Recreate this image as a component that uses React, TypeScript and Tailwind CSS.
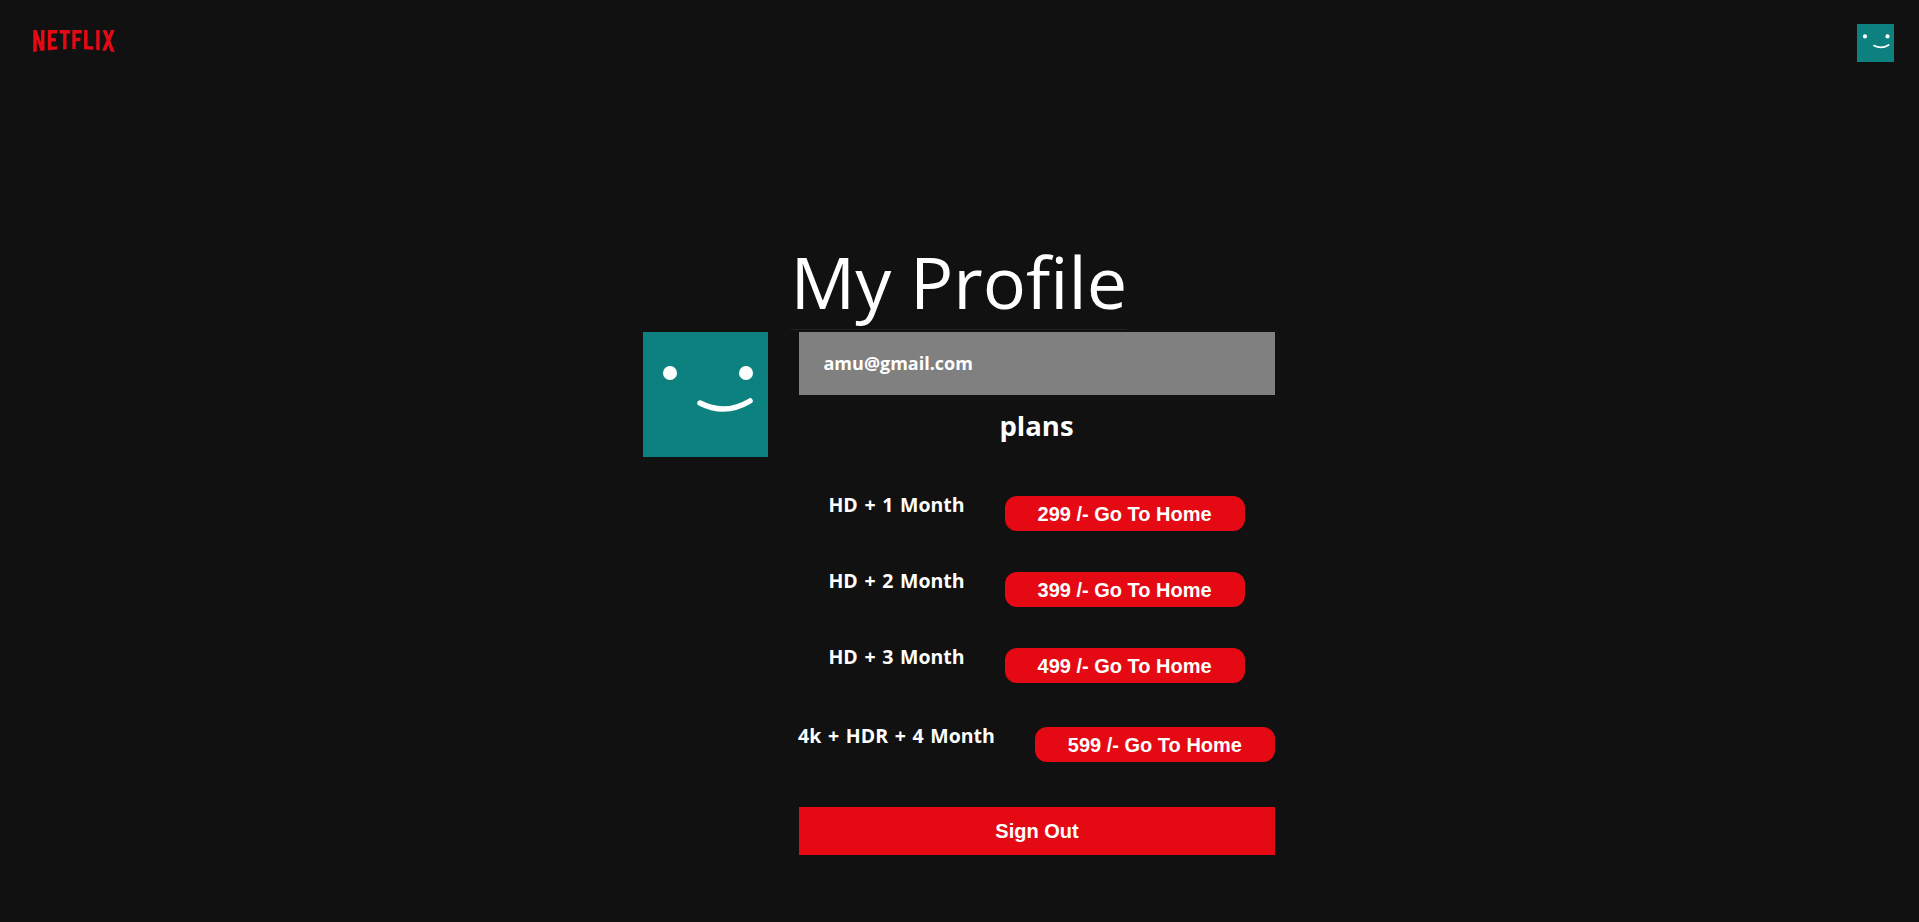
const plans = [
  { label: 'HD + 1 Month', price: '299 /- Go To Home', spacing: 'mb-[41px]' },
  { label: 'HD + 2 Month', price: '399 /- Go To Home', spacing: 'mb-[41px]' },
  { label: 'HD + 3 Month', price: '499 /- Go To Home', spacing: 'mb-[44px]' },
  { label: '4k + HDR + 4 Month', price: '599 /- Go To Home', spacing: 'mb-[45px]' }
];

const Face = ({ className }: { className: string }) => (
  <svg viewBox="0 0 125 125" preserveAspectRatio="none" className={className}>
    <rect width="125" height="125" fill="#0d8080" />
    <ellipse cx="27" cy="41" rx="7" ry="7" fill="#fff" />
    <ellipse cx="103" cy="41" rx="7" ry="7" fill="#fff" />
    <path d="M57 71 Q82 84 107 69" fill="none" stroke="#fff" strokeWidth="5.5" strokeLinecap="round" />
  </svg>
);

const Logo = () => (
  <svg viewBox="0 0 1024 276.742" className="h-[22px] w-[82px]" fill="#e50914">
    <path d="M140.803 258.904c-15.404 2.705-31.079 3.516-47.294 5.676l-49.458-144.856v151.073c-15.404 1.621-29.457 3.783-44.051 5.945v-276.742h41.08l56.212 157.021v-157.021h43.511v258.904zm85.131-157.558c16.757 0 42.431-.811 57.835-.811v43.24c-19.189 0-41.619 0-57.835.811v64.322c25.405-1.621 50.809-3.785 76.482-4.596v41.617l-119.724 9.461v-255.39h119.724v43.241h-76.482v58.105zm237.284-58.104h-44.862v198.908c-14.594 0-29.188 0-43.239.539v-199.447h-44.862v-43.242h132.965l-.002 43.242zm70.266 55.132h59.187v43.24h-59.187v98.104h-42.433v-239.718h120.808v43.241h-78.375v55.133zm148.641 103.507c24.594.539 49.456 2.434 73.51 3.783v42.701c-38.646-2.434-77.293-4.863-116.75-5.676v-242.689h43.24v201.881zm109.994 49.457c13.783.812 28.377 1.623 42.43 3.242v-254.58h-42.43v251.338zm231.881-251.338l-54.863 131.615 54.863 145.127c-16.217-2.162-32.432-5.135-48.648-7.838l-31.078-79.994-31.617 73.51c-15.678-2.705-30.812-3.516-46.484-5.678l55.672-126.75-50.269-129.992h46.482l28.377 72.699 30.27-72.699h47.295z" />
  </svg>
);

export default function App() {
  return (
    <div className="h-[922px] overflow-hidden bg-[#111111] font-['Open_Sans',sans-serif] text-white">
      <header className="flex h-[62px] items-start justify-between pr-[25px] pl-[33px]">
        <div className="pt-[30px]">
          <Logo />
        </div>
        <div className="pt-[24px]">
          <Face className="h-[38px] w-[37px]" />
        </div>
      </header>

      <main className="mx-auto mt-[170px] flex w-[632px] -translate-x-px flex-col">
        <h1 className="h-[98px] w-[336px] self-center border-b border-[#222222] text-center text-[72px] leading-[98px] font-normal whitespace-nowrap">
          My Profile
        </h1>
        <div className="mt-[2px] flex gap-[31px]">
          <Face className="h-[125px] w-[125px] shrink-0" />
          <div className="flex w-[476px] flex-col">
            <div className="flex h-[63px] items-center bg-[#808080] pl-[25px] text-[18px] font-bold">
              amu@gmail.com
            </div>
            <h2 className="mt-[14px] mb-[54px] text-center text-[27.5px] leading-[33px] font-bold">
              plans
            </h2>
            {plans.map(plan => (
              <div key={plan.label} className={`flex justify-center gap-10 ${plan.spacing}`}>
                <span className="text-[19.5px] leading-[17px] font-bold whitespace-nowrap [word-spacing:1.6px]">
                  {plan.label}
                </span>
                <button
                  type="button"
                  className="h-[35px] w-[240px] shrink-0 rounded-[12px] bg-[#e50914] font-['Liberation_Sans',sans-serif] text-[20px] font-bold"
                >
                  {plan.price}
                </button>
              </div>
            ))}
            <button
              type="button"
              className="h-[48px] bg-[#e50914] pl-px font-['Liberation_Sans',sans-serif] text-[20px] font-bold"
            >
              Sign Out
            </button>
          </div>
        </div>
      </main>
    </div>
  );
}
